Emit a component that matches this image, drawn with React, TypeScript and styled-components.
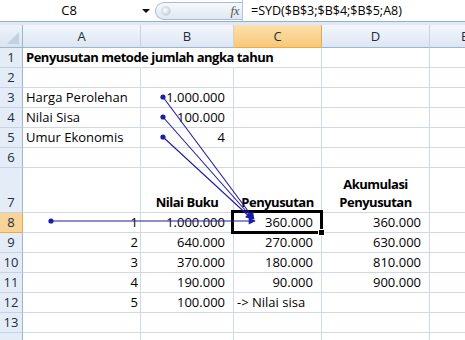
import React from 'react';
import styled, { createGlobalStyle } from 'styled-components';

type Align = 'left' | 'right' | 'center';

interface CellData {
	text: string;
	align?: Align;
	bold?: boolean;
	pad?: number;
	noRight?: boolean;
}

interface RowData {
	num: number;
	label?: string;
	height: number;
	cells: (CellData | null)[];
}

const GlobalStyle = createGlobalStyle`
	html, body {
		margin: 0;
		padding: 0;
		background: #ffffff;
		overflow: hidden;
	}
`;

const COLS = [118, 93, 88, 108, 70];
const LETTERS = ['A', 'B', 'C', 'D', 'E'];

const Window = styled.div`
	position: relative;
	width: 465px;
	height: 340px;
	overflow: hidden;
	background: #ffffff;
	font-family: 'Open Sans', 'Liberation Sans', sans-serif;
	font-size: 13px;
	color: #000;
`;

const FormulaBar = styled.div`
	display: flex;
	align-items: center;
	height: 21px;
	border-bottom: 1px solid #9aaec8;
	background: #ffffff;
`;

const NameBox = styled.div`
	width: 138px;
	text-align: center;
	font-size: 13px;
	line-height: 21px;
`;

const DropArrow = styled.div`
	width: 0;
	height: 0;
	margin-left: 4px;
	border-left: 4px solid transparent;
	border-right: 4px solid transparent;
	border-top: 4px solid #111;
`;

const FxPill = styled.div`
	display: flex;
	align-items: center;
	justify-content: space-between;
	box-sizing: border-box;
	margin-left: 5px;
	width: 87px;
	height: 18px;
	padding: 0 3px 0 5px;
	border: 1px solid #a9bcd4;
	border-right: none;
	border-radius: 9px 0 0 9px;
	background: linear-gradient(#f7f9fc, #dfe7f2);
`;

const Knob = styled.div`
	width: 8px;
	height: 8px;
	border-radius: 50%;
	background: radial-gradient(circle at 40% 40%, #ffffff, #c9d2dd 70%);
	border: 1px solid #d3dbe5;
`;

const FxLabel = styled.span`
	font-family: 'Liberation Serif', serif;
	font-style: italic;
	font-size: 13px;
	color: #555;
	letter-spacing: -0.5px;
`;

const FormulaInput = styled.div`
	flex: 1;
	height: 21px;
	box-sizing: border-box;
	border-left: 1px solid #b5c4d8;
	padding-left: 8px;
	font-size: 12.5px;
	line-height: 21px;
	white-space: nowrap;
`;

const Spacer = styled.div`
	height: 3px;
	background: #dfe8f5;
`;

const Sheet = styled.div<{ $rows: string }>`
	display: grid;
	grid-template-columns: 23px ${COLS.map((c) => `${c}px`).join(' ')};
	grid-template-rows: ${({ $rows }) => $rows};
`;

const Corner = styled.div`
	position: relative;
	box-sizing: border-box;
	border-right: 1px solid #9eb6ce;
	border-bottom: 1px solid #9eb6ce;
	background: linear-gradient(#eef3fa, #d8e3f1);
	&::after {
		content: '';
		position: absolute;
		right: 3px;
		bottom: 3px;
		width: 0;
		height: 0;
		border-left: 12px solid transparent;
		border-bottom: 12px solid #c3d0e2;
	}
`;

const ColHead = styled.div<{ $active?: boolean }>`
	display: flex;
	align-items: center;
	justify-content: center;
	box-sizing: border-box;
	border-right: 1px solid ${({ $active }) => ($active ? '#f2a93e' : '#c5d3e5')};
	border-bottom: 1px solid ${({ $active }) => ($active ? '#f2a93e' : '#9eb6ce')};
	background: ${({ $active }) =>
		$active
			? 'linear-gradient(#fbe0ad, #f7c978)'
			: 'linear-gradient(#f3f7fc, #dce6f3)'};
	color: #1f2d3d;
	font-size: 13px;
`;

const RowHead = styled.div<{ $active?: boolean }>`
	display: flex;
	align-items: flex-end;
	justify-content: center;
	box-sizing: border-box;
	padding-bottom: 1px;
	border-right: 1px solid ${({ $active }) => ($active ? '#f2a93e' : '#9eb6ce')};
	border-bottom: 1px solid ${({ $active }) => ($active ? '#f2a93e' : '#c5d3e5')};
	background: ${({ $active }) => ($active ? '#f9d49a' : '#e4ecf7')};
	color: #1f2d3d;
	font-size: 13px;
	line-height: 18px;
`;

const Cell = styled.div<{ $align: Align; $bold?: boolean; $pad: number; $noRight?: boolean }>`
	display: flex;
	align-items: flex-end;
	justify-content: ${({ $align }) =>
		$align === 'right' ? 'flex-end' : $align === 'center' ? 'center' : 'flex-start'};
	box-sizing: border-box;
	min-width: 0;
	padding: 0 ${({ $pad }) => $pad}px 1px 3px;
	border-right: 1px solid ${({ $noRight }) => ($noRight ? 'transparent' : '#d0d7e5')};
	border-bottom: 1px solid #d0d7e5;
	font-weight: ${({ $bold }) => ($bold ? 700 : 400)};
	letter-spacing: ${({ $bold }) => ($bold ? '-0.5px' : '0')};
	text-align: ${({ $align }) => $align};
	line-height: 18px;
	overflow: visible;
`;

const CellText = styled.span<{ $nowrap?: boolean }>`
	white-space: ${({ $nowrap }) => ($nowrap ? 'nowrap' : 'pre-line')};
`;

const Selection = styled.div`
	position: absolute;
	left: 231px;
	top: 210px;
	width: 92px;
	height: 24px;
	box-sizing: border-box;
	border: 3px solid #000;
	pointer-events: none;
	&::after {
		content: '';
		position: absolute;
		right: -5px;
		bottom: -5px;
		width: 5px;
		height: 5px;
		background: #000;
		border: 1px solid #fff;
	}
`;

const Arrows = styled.svg`
	position: absolute;
	left: 0;
	top: 0;
	pointer-events: none;
`;

const num = (t: string): CellData => ({ text: t, align: 'right', pad: 8 });
const idx = (t: string): CellData => ({ text: t, align: 'right', pad: 2 });
const empty = (): (CellData | null)[] => [null, null, null, null, null];

const rows: RowData[] = [
	{
		num: 1,
		height: 20,
		cells: [
			{ text: 'Penyusutan metode jumlah angka tahun', bold: true, noRight: true },
			{ text: '', noRight: true },
			null,
			null,
			null,
		],
	},
	{ num: 2, height: 20, cells: empty() },
	{ num: 3, height: 20, cells: [{ text: 'Harga Perolehan' }, num('1.000.000'), null, null, null] },
	{ num: 4, height: 20, cells: [{ text: 'Nilai Sisa' }, num('100.000'), null, null, null] },
	{ num: 5, height: 20, cells: [{ text: 'Umur Ekonomis' }, num('4'), null, null, null] },
	{ num: 6, height: 20, cells: empty() },
	{
		num: 7,
		height: 45,
		cells: [
			null,
			{ text: 'Nilai Buku', bold: true, align: 'center' },
			{ text: 'Penyusutan', bold: true, align: 'center' },
			{ text: 'Akumulasi\nPenyusutan', bold: true, align: 'center' },
			null,
		],
	},
	{ num: 8, height: 20, cells: [idx('1'), num('1.000.000'), num('360.000'), num('360.000'), null] },
	{ num: 9, height: 20, cells: [idx('2'), num('640.000'), num('270.000'), num('630.000'), null] },
	{ num: 10, height: 20, cells: [idx('3'), num('370.000'), num('180.000'), num('810.000'), null] },
	{ num: 11, height: 20, cells: [idx('4'), num('190.000'), num('90.000'), num('900.000'), null] },
	{ num: 12, height: 20, cells: [idx('5'), num('100.000'), { text: '-> Nilai sisa' }, null, null] },
	{ num: 13, height: 20, cells: empty() },
	// only the top edge of row 14 is in view, its number is below the fold
	{ num: 14, label: '', height: 20, cells: empty() },
];

const ACTIVE_COL = 2;
const ACTIVE_ROW = 8;

const precedents = [
	[163, 97],
	[163, 117],
	[163, 137],
	[51, 221],
];

const App: React.FC = () => {
	const template = ['23px', ...rows.map((r) => `${r.height}px`)].join(' ');
	return (
		<Window>
			<GlobalStyle />
			<FormulaBar>
				<NameBox>C8</NameBox>
				<DropArrow />
				<FxPill>
					<Knob />
					<FxLabel>fx</FxLabel>
				</FxPill>
				<FormulaInput>=SYD($B$3;$B$4;$B$5;A8)</FormulaInput>
			</FormulaBar>
			<Spacer />
			<Sheet $rows={template}>
				<Corner />
				{LETTERS.map((l, i) => (
					<ColHead key={l} $active={i === ACTIVE_COL}>
						{l}
					</ColHead>
				))}
				{rows.map((r) => (
					<React.Fragment key={r.num}>
						<RowHead $active={r.num === ACTIVE_ROW}>{r.label ?? r.num}</RowHead>
						{r.cells.map((c, i) => (
							<Cell
								key={i}
								$align={c?.align ?? 'left'}
								$bold={c?.bold}
								$pad={c?.pad ?? 3}
								$noRight={c?.noRight}
							>
								{c?.text ? <CellText $nowrap={r.num === 1}>{c.text}</CellText> : null}
							</Cell>
						))}
					</React.Fragment>
				))}
			</Sheet>
			<Selection />
			<Arrows width={465} height={340} viewBox="0 0 465 340">
				<defs>
					<marker
						id="head"
						viewBox="0 0 10 10"
						refX="9"
						refY="5"
						markerWidth="9"
						markerHeight="7"
						markerUnits="userSpaceOnUse"
						orient="auto"
					>
						<path d="M0 0 L10 5 L0 10 z" fill="#1c1ca6" />
					</marker>
				</defs>
				{precedents.map(([x, y], i) => (
					<g key={i}>
						<line
							x1={x}
							y1={y}
							x2={i === 3 ? 255 : 254 - i}
							y2={i === 3 ? 221 : 219}
							stroke="#1c1ca6"
							strokeWidth={1.1}
							markerEnd="url(#head)"
						/>
						<circle cx={x} cy={y} r={2.6} fill="#1c1ca6" />
					</g>
				))}
			</Arrows>
		</Window>
	);
};

export default App;
